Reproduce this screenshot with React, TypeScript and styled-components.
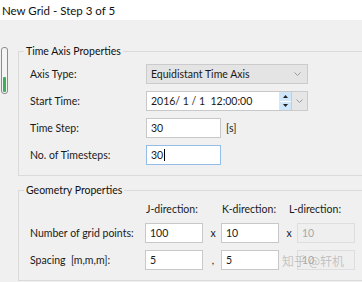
import styled, { createGlobalStyle } from "styled-components";

const GlobalStyle = createGlobalStyle`
  html, body {
    margin: 0;
    padding: 0;
    background: #f0f0f0;
    overflow: hidden;
  }
  body {
    font-family: Lato, "Noto Sans CJK SC", sans-serif;
    font-size: 10.5px;
    color: #1a1a1a;
  }
`;

const Window = styled.div`
  position: relative;
  width: 400px;
  height: 282px;
  overflow: hidden;
  background: #f0f0f0;
`;

const TitleBar = styled.div`
  height: 20px;
  background: #ffffff;
  display: flex;
  align-items: center;
  padding-left: 2px;
  font-size: 11.5px;
  color: #111;
`;

const Body = styled.div`
  display: flex;
`;

const SideRail = styled.div`
  width: 18px;
  flex-shrink: 0;
  padding-top: 27px;
`;

const ProgressTrack = styled.div`
  margin-left: 1px;
  width: 5px;
  height: 43px;
  border: 1px solid #8c8c8c;
  border-radius: 3px;
  padding: 1px 0;
  display: flex;
  flex-direction: column;
  justify-content: flex-end;
  background: #f4f4f4;
`;

const ProgressFill = styled.div`
  margin: 0 1px;
  background: #3dae5a;
  border-radius: 1px;
`;

const Content = styled.div`
  flex: 1;
  display: flex;
  flex-direction: column;
`;

const Group = styled.fieldset<{ $top: number }>`
  margin: ${(p) => p.$top}px 0 0 0;
  padding: 6px 11px 10px 11px;
  border: 1px solid #dadada;
  min-width: 0;
`;

const Legend = styled.legend`
  margin-left: -6px;
  padding: 0 2px;
  font-size: 10.5px;
  line-height: 13px;
  color: #111;
`;

const FormGrid = styled.div`
  display: grid;
  grid-template-columns: 116px auto;
  grid-auto-rows: 20px;
  row-gap: 7px;
  align-items: center;
  justify-items: start;
`;

const Label = styled.div`
  line-height: 20px;
  white-space: pre;
`;

const Combo = styled.div`
  box-sizing: border-box;
  width: 162px;
  height: 20px;
  display: flex;
  align-items: center;
  justify-content: space-between;
  padding: 0 6px 0 4px;
  background: #e4e4e4;
  border: 1px solid #cbcbcb;
`;

const Chevron = () => (
  <svg width="7" height="4" viewBox="0 0 7 4">
    <path d="M0.5 0.5 L3.5 3.5 L6.5 0.5" fill="none" stroke="#9a9a9a" strokeWidth="1" />
  </svg>
);

const DateRow = styled.div`
  display: flex;
  width: 162px;
  height: 20px;
`;

const DateBox = styled.div`
  box-sizing: border-box;
  flex: 1;
  display: flex;
  align-items: center;
  padding-left: 4px;
  background: #ffffff;
  border: 1px solid #c8c8c8;
  border-right: none;
`;

const DateText = styled.span`
  flex: 1;
  white-space: pre;
`;

const Spinner = styled.div`
  width: 11px;
  height: 18px;
  display: flex;
  flex-direction: column;
  background: #cfe5f8;
  border-left: 1px solid #d6e6f4;
`;

const SpinHalf = styled.div<{ $down?: boolean }>`
  flex: 1;
  display: flex;
  align-items: center;
  justify-content: center;
  border-top: ${(p) => (p.$down ? "1px solid #ffffff" : "none")};
`;

const DropButton = styled.div`
  box-sizing: border-box;
  width: 17px;
  display: flex;
  align-items: center;
  justify-content: center;
  background: #e6e6e6;
  border: 1px solid #cbcbcb;
`;

const TextBox = styled.div<{ $width: number; $focused?: boolean; $disabled?: boolean }>`
  box-sizing: border-box;
  width: ${(p) => p.$width}px;
  height: 20px;
  display: flex;
  align-items: center;
  padding-left: 4px;
  background: ${(p) => (p.$disabled ? "#efefef" : "#ffffff")};
  border: 1px solid
    ${(p) => (p.$focused ? "#93bde6" : p.$disabled ? "#dedede" : "#c8c8c8")};
  color: ${(p) => (p.$disabled ? "#a8a8a8" : "#1a1a1a")};
`;

const Caret = styled.span`
  display: inline-block;
  width: 1px;
  height: 12px;
  margin-left: 1px;
  background: #000;
`;

const WithUnit = styled.div`
  display: flex;
  align-items: center;
  gap: 5px;
`;

const GeoGrid = styled.div`
  display: grid;
  grid-template-columns: 115px 58px 18px 58px 18px 58px;
  grid-template-rows: 13px 20px 20px;
  row-gap: 7px;
  align-items: center;
`;

const ColHeader = styled.div<{ $col: string; $pad?: number }>`
  grid-column: ${(p) => p.$col};
  padding-left: ${(p) => p.$pad ?? 0}px;
  line-height: 13px;
  white-space: nowrap;
`;

const Sep = styled.div`
  text-align: center;
  padding-left: 2px;
  line-height: 20px;
`;

const Watermark = styled.div`
  position: absolute;
  left: 282px;
  top: 252px;
  font-family: "Noto Sans CJK SC", sans-serif;
  font-size: 12px;
  color: rgba(150, 150, 150, 0.5);
  white-space: pre;
`;

const progress = 3 / 5;

export default function App() {
  return (
    <Window>
      <GlobalStyle />
      <TitleBar>New Grid - Step 3 of 5</TitleBar>
      <Body>
        <SideRail>
          <ProgressTrack>
            <ProgressFill style={{ height: `${progress * 60}%` }} />
          </ProgressTrack>
        </SideRail>
        <Content>
          <Group $top={25}>
            <Legend>Time Axis Properties</Legend>
            <FormGrid>
              <Label>Axis Type:</Label>
              <Combo>
                <span>Equidistant Time Axis</span>
                <Chevron />
              </Combo>

              <Label>Start Time:</Label>
              <DateRow>
                <DateBox>
                  <DateText>2016/ 1 / 1  12:00:00</DateText>
                  <Spinner>
                    <SpinHalf>
                      <svg width="5" height="3" viewBox="0 0 5 3">
                        <path d="M0 3 L2.5 0 L5 3 Z" fill="#222" />
                      </svg>
                    </SpinHalf>
                    <SpinHalf $down>
                      <svg width="5" height="3" viewBox="0 0 5 3">
                        <path d="M0 0 L2.5 3 L5 0 Z" fill="#222" />
                      </svg>
                    </SpinHalf>
                  </Spinner>
                </DateBox>
                <DropButton>
                  <Chevron />
                </DropButton>
              </DateRow>

              <Label>Time Step:</Label>
              <WithUnit>
                <TextBox $width={75}>30</TextBox>
                <span>[s]</span>
              </WithUnit>

              <Label>No. of Timesteps:</Label>
              <TextBox $width={75} $focused>
                30
                <Caret />
              </TextBox>
            </FormGrid>
          </Group>

          <Group $top={8}>
            <Legend>Geometry Properties</Legend>
            <GeoGrid>
              <ColHeader $col="2 / 4" $pad={1}>J-direction:</ColHeader>
              <ColHeader $col="4 / 5" $pad={1}>K-direction:</ColHeader>
              <ColHeader $col="5 / 7" $pad={10}>L-direction:</ColHeader>

              <Label>Number of grid points:</Label>
              <TextBox $width={58}>100</TextBox>
              <Sep>x</Sep>
              <TextBox $width={58}>10</TextBox>
              <Sep>x</Sep>
              <TextBox $width={58} $disabled>10</TextBox>

              <Label>Spacing  [m,m,m]:</Label>
              <TextBox $width={58}>5</TextBox>
              <Sep>,</Sep>
              <TextBox $width={58}>5</TextBox>
              <Sep />
              <TextBox $width={58} $disabled>10</TextBox>
            </GeoGrid>
          </Group>
        </Content>
      </Body>
      <Watermark>知乎 @轩机</Watermark>
    </Window>
  );
}
